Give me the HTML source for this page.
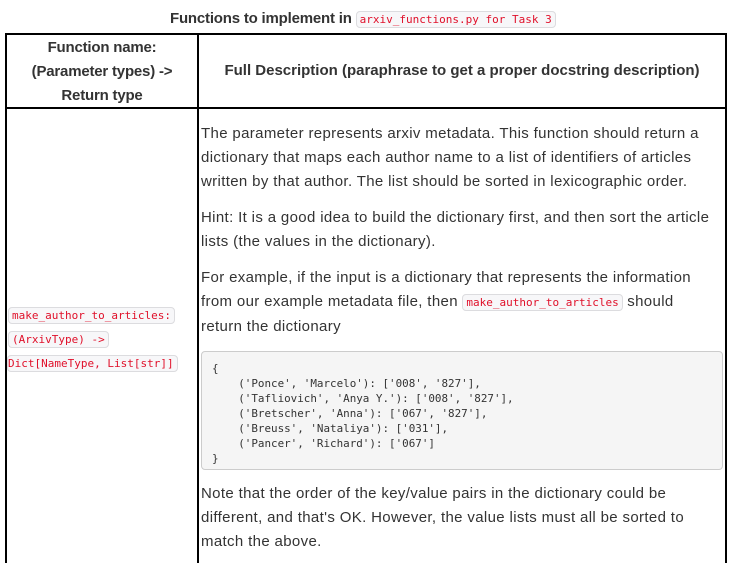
<!DOCTYPE html>
<html><head><style>
*{margin:0;padding:0;box-sizing:border-box}
body{width:736px;height:559px;overflow:hidden;background:#fff;font-family:"Liberation Sans",sans-serif;color:#333;position:relative}
.a{position:absolute;white-space:nowrap}
code{font-family:"DejaVu Sans Mono","Liberation Mono",monospace;font-size:11px;font-weight:normal;letter-spacing:0;color:#e0102a;background:#f7f7f9;border:1px solid #dcdcdf;border-radius:4px;padding:1px 3px}
.t{font-size:15px;line-height:24px;color:#333;letter-spacing:0.35px}
.b{position:absolute;background:#000}
pre{font-family:"DejaVu Sans Mono","Liberation Mono",monospace;font-size:10.9px;line-height:15px;color:#333}
</style></head><body>
<div class="a" style="left:170px;top:10px;font-size:15px;font-weight:bold;color:#333;letter-spacing:-0.2px">Functions to implement in <code>arxiv_functions.py for Task 3</code></div>
<div class="b" style="left:5px;top:33px;width:722px;height:2px"></div>
<div class="b" style="left:5px;top:107px;width:722px;height:2px"></div>
<div class="b" style="left:5px;top:33px;width:2px;height:530px"></div>
<div class="b" style="left:197px;top:33px;width:2px;height:530px"></div>
<div class="b" style="left:725px;top:33px;width:2px;height:530px"></div>
<div class="a" style="left:7px;width:190px;top:36px;text-align:center;font-size:15px;line-height:24px;font-weight:bold;letter-spacing:-0.2px">Function name:<br>(Parameter types) -&gt;<br>Return type</div>
<div class="a" style="left:199px;width:526px;top:59px;text-align:center;font-size:15px;line-height:24px;font-weight:bold;letter-spacing:0px">Full Description (paraphrase to get a proper docstring description)</div>
<div class="a" style="left:8px;top:306px"><code>make_author_to_articles:</code></div>
<div class="a" style="left:8px;top:330px"><code>(ArxivType) -&gt;</code></div>
<div class="a" style="left:7px;top:354px"><code style="padding-left:0">Dict[NameType, List[str]]</code></div>
<div class="a t" style="left:201px;top:122px">The parameter represents arxiv metadata. This function should return a<br>dictionary that maps each author name to a list of identifiers of articles<br>written by that author. The list should be sorted in lexicographic order.</div>
<div class="a t" style="left:201px;top:206px">Hint: It is a good idea to build the dictionary first, and then sort the article<br>lists (the values in the dictionary).</div>
<div class="a t" style="left:201px;top:266px">For example, if the input is a dictionary that represents the information<br>from our example metadata file, then <code style="letter-spacing:0">make_author_to_articles</code> should<br>return the dictionary</div>
<div class="a" style="left:201px;top:351px;width:522px;height:119px;background:#f5f5f5;border:1px solid #ccc;border-radius:4px;padding:9px 10px"><pre>{
    ('Ponce', 'Marcelo'): ['008', '827'],
    ('Tafliovich', 'Anya Y.'): ['008', '827'],
    ('Bretscher', 'Anna'): ['067', '827'],
    ('Breuss', 'Nataliya'): ['031'],
    ('Pancer', 'Richard'): ['067']
}</pre></div>
<div class="a t" style="left:201px;top:482px">Note that the order of the key/value pairs in the dictionary could be<br>different, and that's OK. However, the value lists must all be sorted to<br>match the above.</div>
</body></html>
